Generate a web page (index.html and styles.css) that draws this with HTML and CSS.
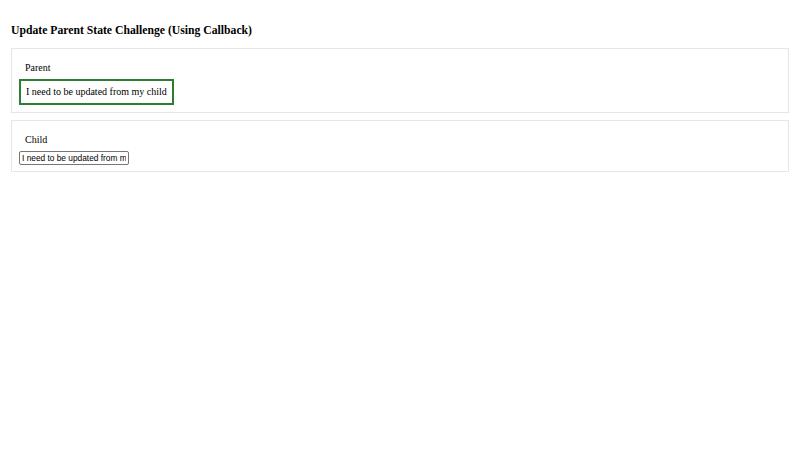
FILE: index.html
```html
<!DOCTYPE html>
<html>
<head>
<meta charset="utf-8">
<link rel="stylesheet" href="styles.css">
</head>
<body>
<div class="app">
  <h3 class="title">Update Parent State Challenge (Using Callback)</h3>
  <div class="card">
    <div class="label">Parent</div>
    <div class="parent-box">I need to be updated from my child</div>
  </div>
  <div class="card child">
    <div class="label">Child</div>
    <input class="child-input" type="text" value="I need to be updated from my child">
  </div>
</div>
</body>
</html>
```
FILE: styles.css
```css
html, body { margin: 0; padding: 0; background: #fff; }
body { font-family: "Liberation Serif", "Times New Roman", serif; color: #000; }
.app { padding: 0 11px; }
.title {
  margin: 0;
  padding-top: 23px;
  height: 25px;
  font-size: 11.7px;
  line-height: 16px;
  font-weight: bold;
}
.card {
  border: 1px solid #e6e6e6;
  padding: 13px 7px 7px 7px;
  margin-bottom: 7px;
}
.child { padding-bottom: 6px; }
.label { font-size: 10px; line-height: 12px; padding-left: 6px; margin-bottom: 5px; }
.parent-box {
  display: inline-block;
  border: 2px solid #2e7d32;
  padding: 5px 5px 5px 5px;
  font-size: 10px;
  line-height: 12px;
}
.child-input {
  display: block;
  box-sizing: border-box;
  font-family: "Liberation Sans", Arial, sans-serif;
  font-size: 8.33px;
  width: 110px;
  height: 14px;
  padding: 0 2px;
  border: 1px solid #767676;
  border-radius: 2px;
  margin: 0;
}
```
